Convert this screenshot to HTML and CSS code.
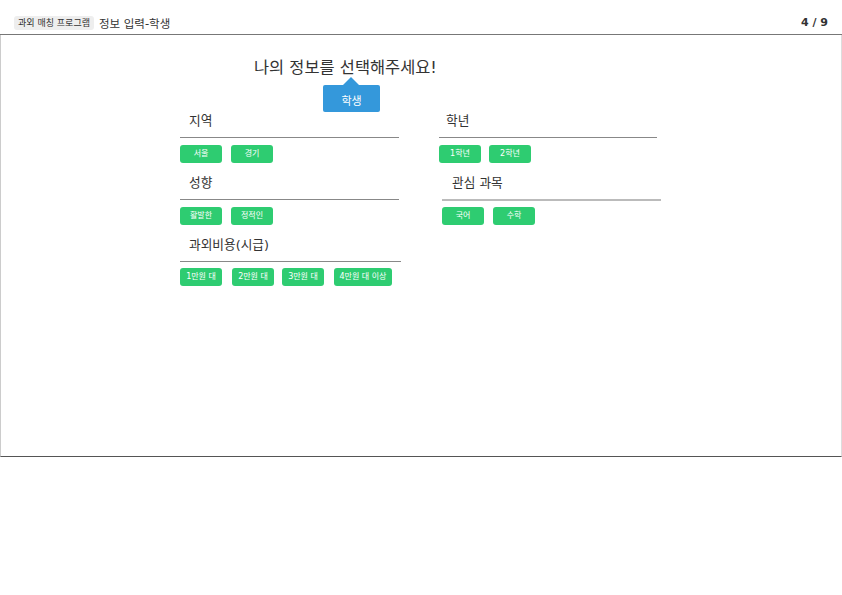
FILE: index.html
```html
<!DOCTYPE html>
<html lang="ko">
<head>
    <meta charset="UTF-8">
    <meta name="viewport" content="width=device-width, initial-scale=1.0">
    <title>정보 입력-학생</title>
    <link rel="stylesheet" href="styles.css">
</head>
<body>
    <header class="top-bar">
        <div class="crumbs">
            <span class="tag">과외 매칭 프로그램</span>
            <span class="page-name">정보 입력-학생</span>
        </div>
        <div class="page-no">4 / 9</div>
    </header>
    <main class="panel">
        <h1 class="title">나의 정보를 선택해주세요!</h1>
        <div class="tab">학생</div>
        <div class="columns">
            <div class="col col-left">
                <section class="group">
                    <h2>지역</h2>
                    <div class="chips">
                        <button class="chip">서울</button>
                        <button class="chip">경기</button>
                    </div>
                </section>
                <section class="group">
                    <h2>성향</h2>
                    <div class="chips">
                        <button class="chip">활발한</button>
                        <button class="chip">정적인</button>
                    </div>
                </section>
                <section class="group group-wide">
                    <h2>과외비용(시급)</h2>
                    <div class="chips chips-cost">
                        <button class="chip">1만원 대</button>
                        <button class="chip">2만원 대</button>
                        <button class="chip">3만원 대</button>
                        <button class="chip chip-long">4만원 대 이상</button>
                    </div>
                </section>
            </div>
            <div class="col col-right">
                <section class="group group-grade">
                    <h2>학년</h2>
                    <div class="chips chips-grade">
                        <button class="chip">1학년</button>
                        <button class="chip">2학년</button>
                    </div>
                </section>
                <section class="group group-subject">
                    <h2>관심 과목</h2>
                    <div class="chips chips-subject">
                        <button class="chip">국어</button>
                        <button class="chip">수학</button>
                    </div>
                </section>
            </div>
        </div>
    </main>
</body>
</html>
```

FILE: styles.css
```css
* {
    box-sizing: border-box;
}

body {
    margin: 0;
    background: #fff;
    color: #333;
    font-family: "DejaVu Sans", "Noto Sans CJK KR", sans-serif;
}

.top-bar {
    display: flex;
    justify-content: space-between;
    align-items: center;
    height: 35px;
    padding: 10px 14px 0;
    border-bottom: 1px solid #777;
}

.crumbs {
    display: flex;
    align-items: center;
    gap: 5px;
    margin-top: 2px;
}

.tag {
    padding: 0 4px;
    background: #eee;
    border-radius: 3px;
    font-size: 9px;
    line-height: 14px;
}

.page-name {
    font-size: 11.5px;
}

.page-no {
    font-size: 11px;
    font-weight: bold;
}

.panel {
    height: 422px;
    padding: 23px 0 0 179px;
    border-left: 1px solid #ccc;
    border-right: 1px solid #ddd;
    border-bottom: 1px solid #555;
}

.title {
    margin: 0 0 0 74px;
    font-size: 16.4px;
    font-weight: normal;
    line-height: 20px;
}

.tab {
    position: relative;
    width: 57px;
    height: 27px;
    margin: 7px 0 0 143px;
    background: #3498db;
    border-radius: 2px;
    color: #fff;
    font-size: 11px;
    line-height: 33px;
    text-align: center;
}

.tab::before {
    content: "";
    position: absolute;
    top: -8px;
    left: 20px;
    border-left: 8px solid transparent;
    border-right: 8px solid transparent;
    border-bottom: 8px solid #3498db;
}

.columns {
    display: flex;
}

.col-left {
    width: 259px;
}

.group {
    width: 219px;
    height: 62px;
}

.group h2 {
    height: 26px;
    margin: 0;
    padding-left: 9px;
    border-bottom: 1px solid #888;
    font-size: 12.7px;
    font-weight: normal;
    line-height: 17px;
}

.group-wide {
    width: 221px;
}

.group-grade {
    width: 218px;
}

.group-grade h2 {
    padding-left: 7px;
}

.group-subject {
    margin-left: 3px;
}

.group-subject h2 {
    height: 27px;
    padding-left: 10px;
    border-bottom: 2px solid #bbb;
}

.chips {
    display: flex;
    gap: 9px;
    margin-top: 7px;
}

.chips-grade {
    gap: 8px;
}

.chips-cost,
.chips-subject {
    margin-top: 6px;
}

.chips-cost .chip:nth-child(2) {
    margin-left: 1px;
}

.chips-cost .chip:nth-child(3) {
    margin-left: -1px;
}

.chips-cost .chip:nth-child(4) {
    margin-left: 1px;
}

.chip {
    width: 42px;
    height: 18px;
    padding: 0 0 1px;
    background: #2ecc71;
    border: none;
    border-radius: 3px;
    color: #fff;
    font-family: inherit;
    font-size: 8px;
    line-height: 14px;
}

.chip-long {
    width: 58px;
}
```
